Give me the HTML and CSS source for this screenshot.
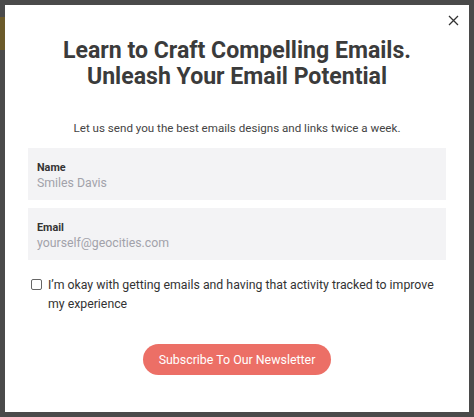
FILE: index.html
```html
<!DOCTYPE html>
<html lang="en">
<head>
<meta charset="utf-8">
<title>Newsletter</title>
<link rel="stylesheet" href="styles.css">
</head>
<body>
<div class="backdrop">
  <div class="modal">
    <button class="close" aria-label="Close">
      <svg width="11" height="11" viewBox="0 0 11 11"><path d="M1 1L10 10M10 1L1 10" stroke="#333" stroke-width="1.3" fill="none"/></svg>
    </button>
    <h1 class="title">Learn to Craft Compelling Emails.<br>Unleash Your Email Potential</h1>
    <p class="subtitle">Let us send you the best emails designs and links twice a week.</p>
    <form class="form">
      <label class="field">
        <span class="field-label">Name</span>
        <span class="field-value">Smiles Davis</span>
      </label>
      <label class="field">
        <span class="field-label">Email</span>
        <span class="field-value">yourself@geocities.com</span>
      </label>
      <label class="consent">
        <span class="box"></span>
        <span class="consent-text">I’m okay with getting emails and having that activity tracked to improve my experience</span>
      </label>
      <div class="actions">
        <button type="button" class="submit">Subscribe To Our Newsletter</button>
      </div>
    </form>
  </div>
</div>
</body>
</html>
```
FILE: styles.css
```css
html, body {
  margin: 0;
  padding: 0;
}
body {
  background: #4a4a4a;
  font-family: Roboto, "Liberation Sans", sans-serif;
  width: 474px;
  height: 417px;
  overflow: hidden;
}
.backdrop {
  padding: 5px;
  background: linear-gradient(to bottom, #4a4a4a 0, #4a4a4a 17px, #6b5a2a 17px, #6b5a2a 50px, #4a4a4a 50px);
  background-size: 5px 100%;
  background-repeat: no-repeat;
  background-color: #4a4a4a;
}
.modal {
  position: relative;
  background: #fff;
  height: 407px;
  box-sizing: border-box;
  padding: 33px 23px 0;
}
.close {
  position: absolute;
  top: 10px;
  right: 10px;
  width: 11px;
  height: 11px;
  padding: 0;
  border: 0;
  background: none;
  display: flex;
}
.title {
  margin: 0;
  text-align: center;
  font-size: 23.1px;
  line-height: 26px;
  font-weight: 700;
  color: #3b3b3b;
}
.subtitle {
  margin: 29px 0 0;
  text-align: center;
  font-size: 11.6px;
  line-height: 18px;
  color: #444;
}
.form {
  margin-top: 11px;
  display: flex;
  flex-direction: column;
}
.field {
  background: #f3f3f5;
  height: 52px;
  box-sizing: border-box;
  padding: 12px 9px 0;
  display: flex;
  flex-direction: column;
  margin-bottom: 8px;
}
.field-label {
  font-size: 10.8px;
  line-height: 15px;
  font-weight: 700;
  color: #333;
}
.field-value {
  font-size: 12.3px;
  line-height: 16px;
  color: #a2a2aa;
}
.consent {
  display: flex;
  align-items: flex-start;
  gap: 6px;
  margin-top: 8px;
  padding-left: 3px;
}
.box {
  flex: none;
  width: 9px;
  height: 9px;
  border: 1px solid #666;
  border-radius: 2px;
  margin-top: 3px;
}
.consent-text {
  font-size: 12.3px;
  line-height: 19px;
  color: #333;
}
.actions {
  display: flex;
  justify-content: center;
  margin-top: 30px;
}
.submit {
  font-family: inherit;
  background: #ec6f66;
  color: #fff;
  border: 0;
  border-radius: 16px;
  height: 31px;
  padding: 0 15.5px;
  font-size: 12.4px;
}
```
